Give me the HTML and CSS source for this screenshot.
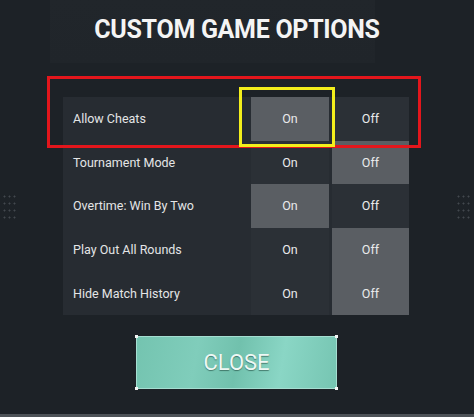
FILE: index.html
```html
<!DOCTYPE html>
<html lang="en">

<head>
    <meta charset="UTF-8">
    <meta name="viewport" content="width=device-width, initial-scale=1.0">
    <title>Custom Game Options</title>
    <link rel="stylesheet" href="styles.css">
</head>

<body>
    <div class="screen">
        <div class="dots dots-left"></div>
        <div class="dots dots-right"></div>

        <div class="header">
            <h1 class="title">CUSTOM GAME OPTIONS</h1>
        </div>

        <div class="options">
            <div class="mark-red"></div>
            <div class="mark-yellow"></div>

            <div class="label">Allow Cheats</div>
            <div class="cell active">On</div>
            <div class="cell">Off</div>

            <div class="label">Tournament Mode</div>
            <div class="cell">On</div>
            <div class="cell active">Off</div>

            <div class="label">Overtime: Win By Two</div>
            <div class="cell active">On</div>
            <div class="cell">Off</div>

            <div class="label">Play Out All Rounds</div>
            <div class="cell">On</div>
            <div class="cell active">Off</div>

            <div class="label">Hide Match History</div>
            <div class="cell">On</div>
            <div class="cell active">Off</div>
        </div>

        <button class="btn-close">CLOSE</button>

        <div class="footer"></div>
    </div>
</body>

</html>
```

FILE: styles.css
```css
body {
    margin: 0;
    background-color: #1d2227;
    font-family: Roboto, 'Liberation Sans', sans-serif;
    color: #e9eaeb;
}

.screen {
    width: 474px;
    height: 417px;
    position: relative;
    display: flex;
    flex-direction: column;
    align-items: center;
    overflow: hidden;
}

.header {
    width: 100%;
    height: 97px;
    background-image: linear-gradient(#21262b, #20252a);
    background-repeat: no-repeat;
    background-position: 50px 0;
    background-size: 325px 63px;
}

.title {
    margin: 15px 0 0;
    text-align: center;
    font-size: 25px;
    font-weight: 700;
    letter-spacing: -0.3px;
    color: #f4f4f4;
}

.options {
    position: relative;
    width: 346px;
    display: grid;
    grid-template-columns: 185px 78px 77px;
    grid-auto-rows: 43.6px;
    column-gap: 3px;
    margin-right: 2px;
    background-color: #272c32;
}

.label {
    display: flex;
    align-items: center;
    padding-left: 10px;
    font-size: 12.5px;
    color: #e4e5e6;
}

.cell {
    display: flex;
    align-items: center;
    justify-content: center;
    font-size: 12.5px;
    background-color: #2b3036;
}

.cell.active {
    background-color: #5a5e63;
}

.mark-red {
    position: absolute;
    left: -16px;
    top: -21px;
    width: 368px;
    height: 66px;
    border: 3px solid #e3161c;
}

.mark-yellow {
    position: absolute;
    left: 176px;
    top: -10px;
    width: 90px;
    height: 54px;
    border: 3px solid #f3ee1c;
    z-index: 2;
}

.btn-close {
    position: relative;
    margin-top: 21px;
    margin-right: 1px;
    width: 201px;
    height: 53px;
    border: 1px solid #a5ded1;
    background-image: linear-gradient(100deg, #74c4b0 0%, #80cdbb 30%, #71c1ad 50%, #8ad6c5 72%, #76c5b2 100%);
    font-family: Roboto, 'Liberation Sans', sans-serif;
    font-size: 22px;
    letter-spacing: 0;
    color: #eef8f5;
    text-shadow: 0 1px 1px rgba(30, 70, 60, 0.6);
}

.btn-close::before,
.btn-close::after {
    content: '';
    position: absolute;
    left: -2px;
    right: -2px;
    height: 3px;
    background-image: linear-gradient(#f4f4f4, #f4f4f4), linear-gradient(#f4f4f4, #f4f4f4);
    background-size: 3px 3px;
    background-position: left, right;
    background-repeat: no-repeat;
}

.btn-close::before {
    top: -2px;
}

.btn-close::after {
    bottom: -2px;
}

.footer {
    margin-top: auto;
    width: 100%;
    height: 3px;
    background-color: #4d5257;
}

.dots {
    position: absolute;
    top: 193px;
    width: 14px;
    height: 28px;
    background-image: radial-gradient(circle, #43484e 0.8px, transparent 1.2px);
    background-size: 5px 7px;
}

.dots-left {
    left: 2px;
}

.dots-right {
    left: 456px;
}
```
